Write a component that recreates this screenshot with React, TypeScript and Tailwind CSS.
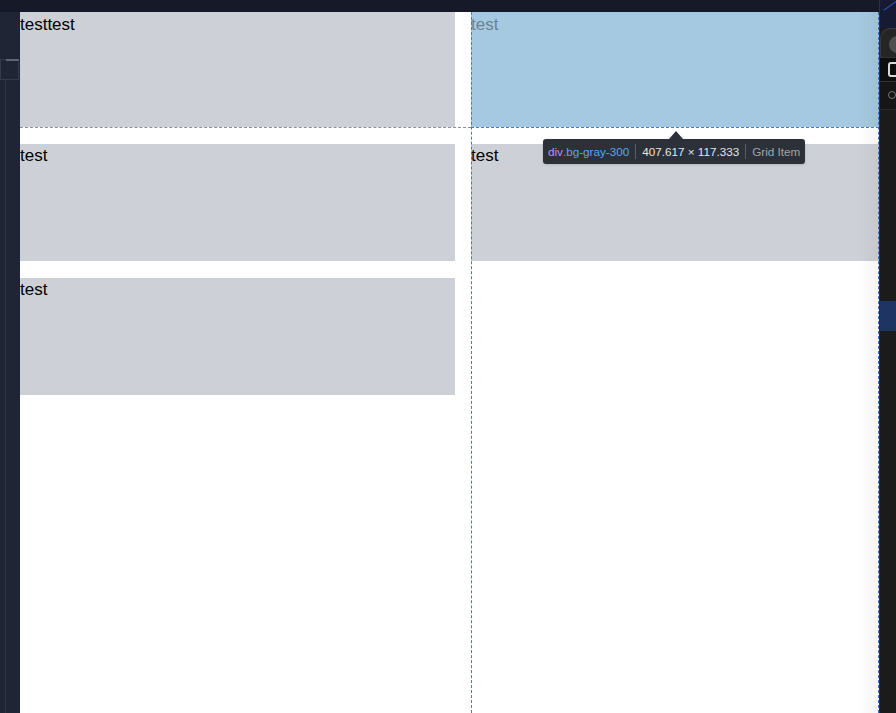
import React from 'react';

const Cell: React.FC<{ label: string; className?: string; textClass?: string }> = ({ label, className = '', textClass = 'text-black' }) => (
  <div className={`bg-[#cdd0d7] ${className}`}>
    <span className={`block text-[17px] leading-6 ${textClass}`}>{label}</span>
  </div>
);

const Tooltip: React.FC = () => (
  <div className="absolute left-[523px] top-[119px] flex flex-col items-center">
    <div className="h-0 w-0 self-start translate-x-[126px] border-x-[7px] border-b-[8px] border-x-transparent border-b-[#2c3038]" />
    <div className="flex items-center h-[25px] rounded-[3px] bg-[#2c3038] px-[5px] text-[11.7px] leading-none font-['Liberation_Sans',Arial,sans-serif] whitespace-nowrap shadow">
      <span className="text-[#c98af4]">div</span>
      <span className="text-[#5aa7f0]">.bg-gray-300</span>
      <span className="mx-[6px] h-[15px] w-px bg-[#5a5e66]" />
      <span className="text-[#e6e6e6]">407.617 × 117.333</span>
      <span className="mx-[6px] h-[15px] w-px bg-[#5a5e66]" />
      <span className="text-[#a3a6ab]">Grid Item</span>
    </div>
  </div>
);

const LeftRail: React.FC = () => (
  <div className="relative w-5 shrink-0 bg-[#1f2535]">
    <div className="absolute left-0 top-[47px] h-[21px] w-[19px] border border-[#343b4b]" />
    <div className="absolute left-[6px] top-[47px] h-[2px] w-[13px] bg-[#5d6472]" />
    <div className="absolute left-[5px] top-[68px] bottom-0 w-px bg-[#2f3646]" />
  </div>
);

const RightPanel: React.FC = () => (
  <div className="flex flex-1 flex-col bg-[#1b1b1b] border-l border-[#2c3142]">
    <div className="relative h-[28px] bg-[#161b33] overflow-hidden">
      <div className="absolute left-[2px] top-[4px] h-px w-[20px] -rotate-[35deg] bg-[#2f4fb8]" />
    </div>
    <div className="h-[29px] rounded-tl-[10px] border-t border-l border-[#3a3a3a] bg-[#262626] pl-[8px] pt-[7px]">
      <div className="h-[17px] w-[17px] rounded-full bg-[#505050]" />
    </div>
    <div className="h-[25px] border-y border-[#333] bg-[#0e0e0e] pl-[8px] pt-[4px]">
      <div className="h-[15px] w-[15px] rounded-[3px] border-2 border-[#d9d9d9]" />
    </div>
    <div className="h-[28px] border-b border-[#2a2a2a] bg-[#161616] pl-[8px] pt-[9px]">
      <div className="h-[8px] w-[8px] rounded-full border-[1.5px] border-[#777]" />
    </div>
    <div className="h-[191px]" />
    <div className="h-[30px] bg-[#1e3462]" />
  </div>
);

export default function App() {
  return (
    <div className="flex w-[896px] h-[713px] overflow-hidden bg-white font-['Liberation_Sans',Arial,sans-serif]">
      <div className="flex w-[879px] shrink-0 flex-col">
        <div className="h-3 shrink-0 bg-[#161928]" />
        <div className="flex flex-1 min-h-0">
          <LeftRail />
          <main className="relative flex-1 overflow-hidden bg-white">
            <div className="grid grid-cols-[435px_407.6px] gap-x-4 gap-y-[17px] content-start">
              <Cell label="testtest" className="h-[115px] pt-px" />
              <Cell label="test" className="h-[115px] pt-px bg-[#a5c9e0]!" textClass="text-[#6b8394]" />
              <Cell label="test" className="h-[117px]" />
              <Cell label="test" className="h-[117px]" />
              <Cell label="test" className="h-[117px]" />
            </div>

            {/* devtools grid overlay */}
            <div className="absolute left-0 top-[115px] w-[451px] border-t border-dashed border-[#8a8f99]" />
            <div className="absolute left-[451px] top-[115px] w-[408px] border-t border-dashed border-[#4a7dbd]" />
            <div className="absolute left-[451px] top-0 bottom-0 border-l border-dashed border-[#5079b0]" />
            <div className="absolute left-[858px] top-0 bottom-0 border-l border-dashed border-[#3f72bd]" />
            <div className="absolute right-px top-0 bottom-0 w-[20px] bg-gradient-to-r from-transparent to-black/[0.04]" />

            <Tooltip />
          </main>
        </div>
      </div>
      <RightPanel />
    </div>
  );
}
